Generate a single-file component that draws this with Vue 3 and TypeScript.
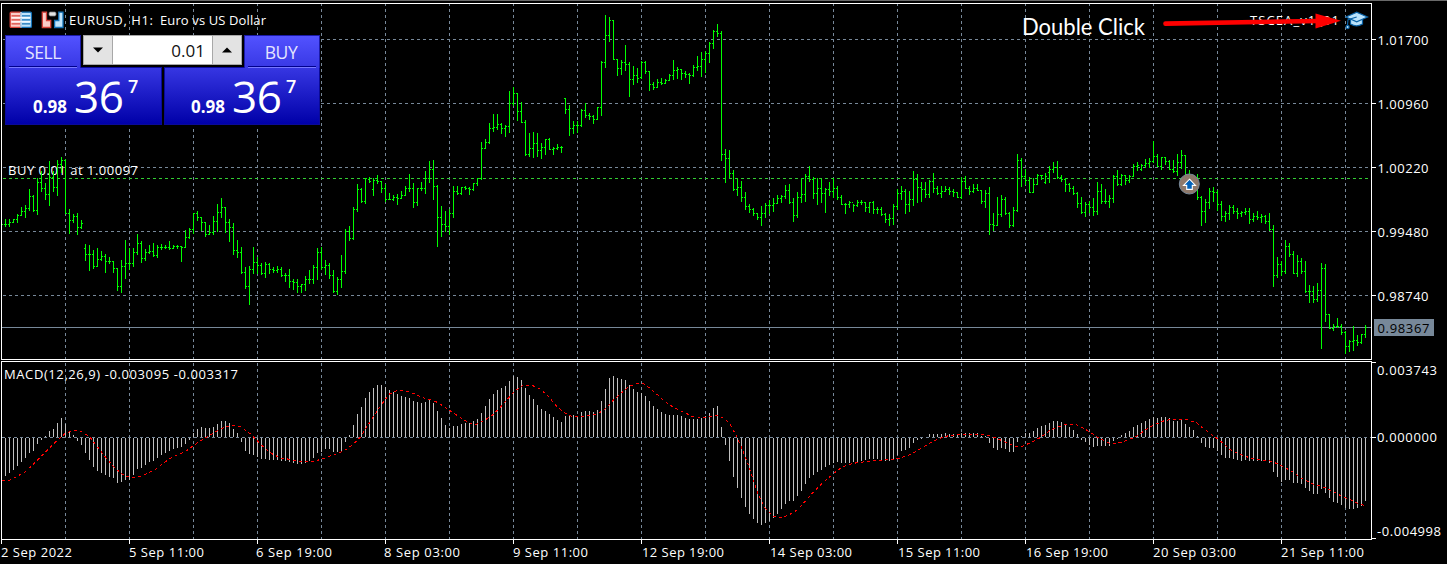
<script setup lang="ts">
interface Segment {
  x: number
  y: number
  data: string
}

const STEP = 4

// Each bar is "high,low,close[,open]" in thirds of a pixel below the segment's y.
const priceSegments: Segment[] = [
  {
    x: 5,
    y: 140,
    data: `237,261,253 237,261,247 237,250,238 222,248,226 201,228,213 195,234,205 147,213,168 165,215,211 115,224,127
      93,155,145 130,180,163 63,198,112 93,155,142 60,168,73 51,98,61 58,222,220 207,282,241 222,248,229 219,285,262
      240,266,251 312,363,343,325 315,393,343 330,387,379 324,381,358 333,362,349 342,399,364 351,372,364 364,399,385
      384,453,439 360,459,379 300,417,370 324,390,370 324,381,337 282,345,310 303,369,355 327,363,337 315,342,334
      309,351,346 315,354,322 313,330,322 315,327,322 303,330,325 315,328,319 315,328,319 318,366,322 270,324,292
      264,298,268 219,282,220 213,243,232 231,274,247 246,291,283 255,285,277 228,285,244 192,276,217 174,234,202
      201,279,247 238,306,262 249,345,331 300,354,337 321,402,397 381,447,439 378,495,388 321,402,367 352,402,376
      369,405,400 366,414,373 370,402,388 381,399,391 378,399,388 381,412,406 399,426,406 387,444,424 417,450,427
      417,459,439 432,459,433 408,453,418 390,432,418 376,432,382 324,420,337 321,390,382 360,405,376 370,417,406
      390,459,454 411,466,418 345,444,394 267,402,273 258,303,295`,
  },
  {
    x: 353,
    y: 80,
    data: `381,480,388 312,396,328 324,369,364 294,372,295 291,309,303,298 294,348,300,328 285,312,304 303,339,325
      313,366,358 339,360,358 345,363,352 342,375,355 333,357,346 318,348,325 282,336,325 309,384,367 324,378,325
      306,333,325 273,342,295 243,309,268 240,360,319 315,501,412 378,471,433 393,456,439 387,465,400 318,414,334
      318,345,340 321,345,322 318,330,325 321,345,328 309,333,310 294,318,295 186,300,205 177,207,187 129,192,145
      102,156,142 102,150,133 129,162,145 135,171,139 33,159,70 21,78,40 39,123,94 66,129,127 120,228,223 159,231,205
      156,234,190 159,231,211 189,237,202 177,225,178 174,210,208 201,225,205 192,210,202 198,219,202 54,102,88,55
      75,168,145 123,162,136 123,159,136 87,141,91 70,114,106 99,120,109 105,132,118 81,120,82`,
  },
  {
    x: 601,
    y: 0,
    data: `183,348,187 45,204,106 51,126,61 60,180,178 177,228,205 180,225,187 135,213,193 186,291,238 198,255,226
      204,249,235 183,237,187,232 183,222,214 213,273,253 246,270,262 237,264,247 234,255,250 237,252,241 222,243,226
      180,240,211 201,237,208 207,240,220 213,234,223 219,252,226 195,231,202 168,213,199 156,231,178 153,219,160
      126,189,130 90,147,94 72,111,100 93,483,463 447,549,475 450,534,520 510,573,568 534,588,562 543,606,592
      576,630,619 612,639,628 624,648,640 639,660,652 618,678,640 609,654,616 600,642,616 594,636,610 585,612,595
      585,609,589 555,597,571 552,612,607 594,666,646 576,654,592 534,609,583 522,606,529 498,546,538 531,597,580
      534,615,565 537,609,580 564,639,568 546,588,574 534,594,565 558,600,592 585,615,613 609,642,613 603,624,607
      612,636,616 600,621,607 600,615,607 606,636,622 606,639,607 603,642,628 621,642,628 621,648,643 639,669,658
      642,678,655 612,675,619 567,630,580 558,600,574 567,642,613 573,636,598 513,618,538 522,609,562 546,606,568
      546,594,583`,
  },
  {
    x: 929,
    y: 130,
    data: `150,204,154 129,189,175 168,195,190 168,204,184 168,186,178 171,195,184 177,201,187 186,204,202 141,207,154
      138,177,175 168,195,184 162,189,175 162,183,181 180,222,214 180,234,190 171,315,283 249,303,286 201,288,253
      195,261,208 201,255,250 246,294,286 231,291,241 72,246,91 84,171,139 117,165,151 141,189,187 144,189,163
      132,165,136 135,150,137 129,162,139,157 108,159,118,127 96,129,112 93,147,142 135,156,148 144,186,163 159,186,175
      168,195,190 186,234,220 201,252,247 216,261,223 213,249,232 204,258,244 156,255,184 162,222,214 177,222,214
      195,234,205 135,219,139 120,168,163 132,168,136 135,165,151 135,159,139 102,141,109 96,123,106 102,123,106,118
      87,114,100 84,114,94 33,99,79`,
  },
  {
    x: 1157,
    y: 130,
    data: `72,111,109 81,120,82 81,105,94 90,120,118 90,129,124 72,138,97 60,117,76 75,135,133 120,150,145 135,180,150
      132,210,202 198,288,244 207,279,217 174,237,184 171,216,187 180,243,223 213,273,259 243,276,250 225,270,232
      225,252,244 234,267,250 243,262,247 234,255,244 234,282,268 249,276,259 243,270,262 252,279,258 255,282,274
      249,304,298 285,471,436 381,444,403 393,438,424 330,432,349 339,381,373 363,432,430 375,441,394 384,432,424
      393,489,484 465,519,484 468,519,508 459,516,481 399,657,415 402,576,553 552,597,595 582,603,589 564,594,589
      582,615,607 603,672,649 630,666,634 588,663,631 615,648,637 612,642,613 585,624,592`,
  },
]

// Histogram bar ends, in thirds of a pixel below the segment's y.
const macdSegments: Segment[] = [
  {
    x: 5,
    y: 355,
    data: `363 354 345 333 321 309 294 288 267 255 243 228 222 204 189 207 231 240 258 270 294 315 336 348 354 360 366
      369 384 381 375 375 360 342 339 330 321 318 309 300 294 288 282 279 276 267 255 234 222 216 219 219 216 207 198
      198 204 222 234 261 288 297 300 306 312 312 315 315 315 318 318 321 324 327 327 324 318 309 294 291 282 282 291
      291 288 261 240 210 177 156 129 111`,
  },
  {
    x: 373,
    y: 365,
    data: `69 60 60 66 75 81 87 93 96 99 108 111 114 111 105 114 138 159 180 189 183 183 177 174 174 168 162 144 123 102
      87 75 69 63 48 33 36 45 69 90 102 120 132 138 147 156 165 171 153 153 150 153 141 138 138 141 135 108 72 39 33 39
      42 45 60 72 81 84 93 108 123 132 141 147 150 150 150 153 159 162 162 162 159 153 144 129 123`,
  },
  {
    x: 721,
    y: 365,
    data: `186 240 288 336 369 399 426 447 462 474 480 474 468 459 447 432 417 408 408 393 378 357 339 330 321 315 306 300
      294 291 294 294 294 291 291 288 285 282 282 282 285 288 288 282 270 258 255 249 234 225 221 217 207 207 207 207
      204 207 207 210 204 204 204 204 204 213 213 234 249 255 249 252 261 261 231 213 204 204 198 189 183 180 174 168
      168 171 177 186`,
  },
  {
    x: 1073,
    y: 360,
    data: `210 222 240 246 255 261 258 258 258 258 243 237 225 219 213 201 195 189 183 177 171 174 171 171 174 183 183
      180 192 201 210 228 249 261 264 264 273 285 294 294 297 300 303 300 303 303 303 303 303 309 336 351 366 360 360
      369 369 372 384 393 402 402 387 399 414 426 429 435 444 447 447 444 438 423`,
  },
]

// Signal line vertices, in thirds of a pixel from the segment's origin.
const signalSegments: Segment[] = [
  {
    x: 0,
    y: 355,
    data: `6,376 28,376 52,364 76,350 100,328 124,304 148,280 172,256 196,235 220,226 244,230 268,244 292,275 316,306
      340,334 364,356 388,367 412,367 436,358 460,347 484,330 508,312 532,300 556,290 580,272 604,256 628,242 652,228
      676,215 700,211 724,216 748,234 772,257 796,281 820,299 844,309 868,313 892,318 916,320 940,319 964,313 988,304
      1012,296 1036,285 1060,268 1084,243`,
  },
  {
    x: 350,
    y: 365,
    data: `46,193 70,155 94,120 118,87 142,76 166,77 190,85 214,97 238,103 262,112 286,127 310,144 334,159 358,175
      376,179 400,168 424,153 448,130 472,103 496,77 520,60 544,60 568,71 592,90 616,120 640,141 664,153 690,155
      718,152 742,147 766,132 790,106 814,84 838,63 862,56 882,57 906,75 930,96 954,117 978,131 1002,142 1026,154
      1050,157 1074,157`,
  },
  {
    x: 690,
    y: 365,
    data: `82,151 100,159 118,175 138,210 154,246 178,308 202,382 226,430 250,453 274,459 298,449 322,435 346,408
      370,382 394,357 418,337 442,316 466,302 490,295 526,290 574,286 622,281 658,270 694,250 730,229 766,214 802,209
      850,208 886,208 910,216 946,231 976,243 1000,243 1024,232 1054,216`,
  },
  {
    x: 1050,
    y: 360,
    data: `0,211 22,202 46,194 76,193 100,204 124,219 148,235 178,250 202,250 226,243 256,231 286,210 316,193 346,181
      376,178 412,179 440,189 466,210 490,227 514,245 538,267 562,280 598,293 622,298 658,302 682,311 706,323 730,337
      754,354 790,372 826,383 850,395 874,408 898,418 922,430 946,437`,
  },
]

const split = (s: string): string[] => s.trim().split(/\s+/)

let lastClose = 224
const bars: string[] = []
for (const seg of priceSegments) {
  split(seg.data).forEach((item, i) => {
    const [h, l, c, o] = item.split(',').map(Number)
    const x = seg.x + i * STEP
    const top = seg.y + Math.round(h / 3)
    const bottom = seg.y + Math.round(l / 3)
    const close = seg.y + Math.floor(c / 3)
    const open = o === undefined ? lastClose : seg.y + Math.floor(o / 3)
    bars.push(`M${x} ${top}h1v${bottom - top}h-1z`)
    bars.push(`M${x - 1} ${open}h1v1h-1z`)
    bars.push(`M${x + 1} ${close}h1v1h-1z`)
    lastClose = close
  })
}
const pricePath = bars.join('') + 'M2 224h1v1h-1z'

const ZERO = 437
const macdPath = macdSegments
  .flatMap((seg) =>
    split(seg.data).map((item, i) => {
      const x = seg.x + i * STEP
      const end = seg.y + Math.round(Number(item) / 3)
      return end > ZERO ? `M${x} ${ZERO + 1}h1V${end}h-1z` : `M${x} ${end}h1V${ZERO}h-1z`
    }),
  )
  .join('')

const signalPoints = signalSegments
  .flatMap((seg) =>
    split(seg.data).map((item) => {
      const [x, y] = item.split(',').map(Number)
      return `${(seg.x + x / 3).toFixed(1)},${(seg.y + y / 3).toFixed(1)}`
    }),
  )
  .join(' ')

const gridX = Array.from({ length: 21 }, (_, i) => 65.5 + i * 64)
const priceLevels = [
  { y: 39, label: '1.01700' },
  { y: 103, label: '1.00960' },
  { y: 167, label: '1.00220' },
  { y: 231, label: '0.99480' },
  { y: 295, label: '0.98740' },
]
const macdLevels = [
  { y: 362, text: 374.5, x: 1377, w: 60, label: '0.003743' },
  { y: 437, text: 441.5, x: 1377, w: 60, label: '0.000000' },
  { y: 538, text: 535.5, x: 1377, w: 64, label: '-0.004998' },
]
const times = [
  { tick: 1, x: 1, w: 71, label: '2 Sep 2022' },
  { tick: 129, x: 129, w: 75, label: '5 Sep 11:00' },
  { tick: 257, x: 256, w: 76, label: '6 Sep 19:00' },
  { tick: 385, x: 384, w: 76, label: '8 Sep 03:00' },
  { tick: 513, x: 513, w: 75, label: '9 Sep 11:00' },
  { tick: 641, x: 642, w: 82, label: '12 Sep 19:00' },
  { tick: 769, x: 770, w: 82, label: '14 Sep 03:00' },
  { tick: 897, x: 898, w: 82, label: '15 Sep 11:00' },
  { tick: 1025, x: 1026, w: 82, label: '16 Sep 19:00' },
  { tick: 1153, x: 1153, w: 83, label: '20 Sep 03:00' },
  { tick: 1281, x: 1281, w: 83, label: '21 Sep 11:00' },
]
const quotes = [
  { side: 'sell', lead: '0.98', big: '36', sup: '7' },
  { side: 'buy', lead: '0.98', big: '36', sup: '7' },
]
</script>

<template>
  <main class="terminal">
    <svg class="chart" width="1447" height="564" viewBox="0 0 1447 564">
      <g shape-rendering="crispEdges">
        <rect class="edge" x="0" y="0" width="1447" height="1" />
        <g class="grid">
          <template v-for="x in gridX" :key="x">
            <line :x1="x" :x2="x" y1="3" y2="359" />
            <line :x1="x" :x2="x" y1="363" y2="539" />
          </template>
          <line v-for="l in priceLevels" :key="l.y" x1="3" x2="1371" :y1="l.y + 0.5" :y2="l.y + 0.5" />
        </g>
        <line class="entry" x1="3" x2="1371" y1="178.5" y2="178.5" />
        <line class="bid" x1="2" x2="1371" y1="327.5" y2="327.5" />
        <g class="label">
          <text x="8" y="175" textLength="130">BUY 0.01 at 1.00097</text>
        </g>
        <path class="price" :d="pricePath" />
        <path class="macd" :d="macdPath" />
        <line class="zero" x1="2" x2="1371" y1="437.5" y2="437.5" />
        <polyline class="signal" :points="signalPoints" />
        <rect class="frame" x="1.5" y="3.5" width="1370" height="356" />
        <rect class="frame" x="1.5" y="361.5" width="1370" height="178" />
        <g class="ticks">
          <line v-for="l in priceLevels" :key="l.y" x1="1371" x2="1376" :y1="l.y + 0.5" :y2="l.y + 0.5" />
          <line v-for="l in macdLevels" :key="l.y" x1="1371" x2="1376" :y1="l.y + 0.5" :y2="l.y + 0.5" />
          <line v-for="t in times" :key="t.tick" :x1="t.tick + 0.5" :x2="t.tick + 0.5" y1="539" y2="544" />
        </g>
        <rect class="bid-tag" x="1374" y="319" width="60" height="17" />
      </g>

      <g class="label">
        <text v-for="l in priceLevels" :key="l.y" x="1377.5" :y="l.y + 5.5" textLength="51">{{ l.label }}</text>
        <text class="dark" x="1377.5" y="332.5" textLength="52">0.98367</text>
        <text v-for="l in macdLevels" :key="l.y" :x="l.x" :y="l.text" :textLength="l.w">{{ l.label }}</text>
        <text v-for="t in times" :key="t.tick" :x="t.x" y="557" :textLength="t.w">{{ t.label }}</text>
        <text x="4" y="379" textLength="234">MACD(12,26,9) -0.003095 -0.003317</text>
        <text x="69" y="25" textLength="84">EURUSD, H1:</text>
        <text x="160" y="25" textLength="106">Euro vs US Dollar</text>
        <text x="1250" y="25" textLength="89">TSCEA_v1_01</text>
      </g>

      <g class="marker">
        <circle cx="1189.3" cy="184" r="10" />
        <path d="M1189.5 179.2l6 6.2h-3.2v4h-5.6v-4h-3.2z" />
      </g>

      <text class="note" x="1022" y="35" textLength="123" lengthAdjust="spacingAndGlyphs">Double Click</text>
      <g class="pointer">
        <line x1="1165.5" y1="23.6" x2="1318" y2="21" />
        <path d="M1315.5 13.5L1341 20.7L1315.5 28.5z" />
      </g>

      <g class="cap" transform="translate(1345 11)">
        <path d="M5.5 6.5v6.6q6 3.6 12 0V6.5z" />
        <path d="M1 6L11.7 1.2L22.5 6L11.7 10.8z" />
        <path class="tassel" d="M11.7 6L3 8.8L2.5 14" />
        <circle cx="2.6" cy="16" r="1.6" />
      </g>

      <g class="depth" transform="translate(9 11)">
        <rect class="red" x="1.2" y="1.2" width="10.8" height="15.2" rx="1" />
        <rect class="blue" x="12" y="1.2" width="10.4" height="15.2" rx="1" />
        <path class="red" d="M2.5 4.8h8.5M2.5 8.8h8.5M2.5 12.8h8.5" />
        <path class="blue" d="M13 4.8h8M13 8.8h8M13 12.8h8" />
        <path class="gap" d="M2.5 6.8h19M2.5 10.8h19M12 1v15.6" />
      </g>
      <g class="depth" transform="translate(41 11)">
        <path class="red" d="M1.3 1.2h4.2v8.3h4.2v7H1.3z" />
        <path class="blue" d="M22 1.2h-4.2v8.3h-4.2v7H22z" />
        <rect class="knob" x="8" y="1" width="7" height="4" rx="1.4" />
      </g>
    </svg>

    <section class="trade">
      <div class="tabs">
        <button class="tab sell">SELL</button>
        <div class="volume">
          <span class="step"><svg width="10" height="6" viewBox="0 0 10 6"><path d="M0 .5h10L5 5.5z" /></svg></span>
          <span class="amount">0.01</span>
          <span class="step"><svg width="10" height="6" viewBox="0 0 10 6"><path d="M0 5.5h10L5 .5z" /></svg></span>
        </div>
        <button class="tab buy">BUY</button>
      </div>
      <div class="quotes">
        <div v-for="q in quotes" :key="q.side" class="quote">
          <span class="lead">{{ q.lead }}</span>
          <span class="big">{{ q.big }}</span>
          <span class="sup">{{ q.sup }}</span>
        </div>
      </div>
    </section>
  </main>
</template>

<style>
body {
  background: #000;
}
</style>

<style scoped>
.terminal {
  position: relative;
  width: 1447px;
  height: 564px;
  background: #000;
  overflow: hidden;
  font-family: 'Noto Sans', 'Open Sans', sans-serif;
}
.chart {
  display: block;
}
.edge {
  fill: #696969;
}
.grid line {
  stroke: #778899;
  stroke-dasharray: 3 3;
}
.entry {
  stroke: #32cd32;
  stroke-dasharray: 3 3;
}
.bid {
  stroke: #778899;
}
.price {
  fill: #00ff00;
}
.macd {
  fill: #c0c0c0;
}
.zero {
  stroke: #778899;
  stroke-dasharray: 3 3;
}
.signal {
  fill: none;
  stroke: #ff0000;
  stroke-dasharray: 3 3;
}
.frame {
  fill: none;
  stroke: #fff;
}
.ticks line {
  stroke: #fff;
}
.bid-tag {
  fill: #778899;
}
.label text {
  font-family: 'Open Sans', 'Noto Sans', sans-serif;
  font-size: 13px;
  fill: #fff;
}
.label .dark {
  fill: #000;
}
.note {
  font-family: Lato, 'Open Sans', sans-serif;
  font-size: 24px;
  fill: #fff;
}
.pointer line {
  stroke: #ff0000;
  stroke-width: 4.6;
  stroke-linecap: round;
}
.pointer path {
  fill: #ff0000;
}
.marker circle {
  fill: #8e796b;
  stroke: #778899;
}
.marker path {
  fill: #0060b8;
  stroke: #fff;
  stroke-width: 1.1;
}
.cap path,
.cap circle {
  fill: #b9e2fb;
  stroke: #0a62a6;
  stroke-width: 1.2;
}
.cap .tassel {
  fill: none;
}
.depth .red {
  fill: #fbcdc8;
  stroke: #d9433b;
  stroke-width: 1.3;
}
.depth .blue {
  fill: #bfe3fb;
  stroke: #1272b8;
  stroke-width: 1.3;
}
.depth .gap {
  stroke: #fff;
  stroke-width: 1.1;
}
.depth .knob {
  fill: #e4e4e4;
  stroke: #777;
  stroke-width: 0.8;
}
.trade {
  position: absolute;
  left: 5px;
  top: 35px;
  width: 315px;
  height: 91px;
  background: #000;
}
.tabs {
  display: flex;
  justify-content: space-between;
  height: 33px;
}
.tab {
  position: relative;
  z-index: 1;
  width: 76px;
  height: 33px;
  padding: 0;
  border: 1px solid #1a1aa8;
  border-bottom: 0;
  background: linear-gradient(#5252ff, #3838e4);
  color: #e4e4ff;
  font: 17.5px/29px 'Open Sans', sans-serif;
  letter-spacing: -0.4px;
}
.buy {
  padding-right: 2px;
}
.tab::after {
  content: '';
  position: absolute;
  left: 3px;
  right: 3px;
  bottom: 0;
  height: 1px;
  border-top: 1px solid #00008c;
  background: #7878ff;
}
.volume {
  display: flex;
  width: 159px;
  height: 30px;
  box-sizing: border-box;
  border: 1px solid #a8a8a8;
  background: #fff;
}
.step {
  display: flex;
  align-items: center;
  justify-content: center;
  width: 28px;
  padding-bottom: 1px;
  background: #e3e3e3;
}
.amount {
  flex: 1;
  padding-right: 7px;
  border: solid #a8a8a8;
  border-width: 0 1px;
  color: #111;
  text-align: right;
  font: 17px/29px 'Open Sans', sans-serif;
}
.quotes {
  display: flex;
  justify-content: space-between;
  height: 58px;
  margin-top: -1px;
}
.quote {
  display: flex;
  width: 157px;
  height: 58px;
  box-sizing: border-box;
  padding-left: 27px;
  border: 1px solid #0a0a98;
  background: linear-gradient(#3636e2, #0000a8);
  color: #fff;
}
.quote:last-child {
  width: 156px;
  padding-left: 26px;
}
.lead {
  width: 38px;
  font: bold 17px/77px 'Open Sans', sans-serif;
}
.big {
  width: 54px;
  margin-left: 3px;
  font: 44px/56px 'Open Sans', sans-serif;
  letter-spacing: -0.5px;
}
.sup {
  font: 600 18px/36px 'Open Sans', sans-serif;
}
</style>
